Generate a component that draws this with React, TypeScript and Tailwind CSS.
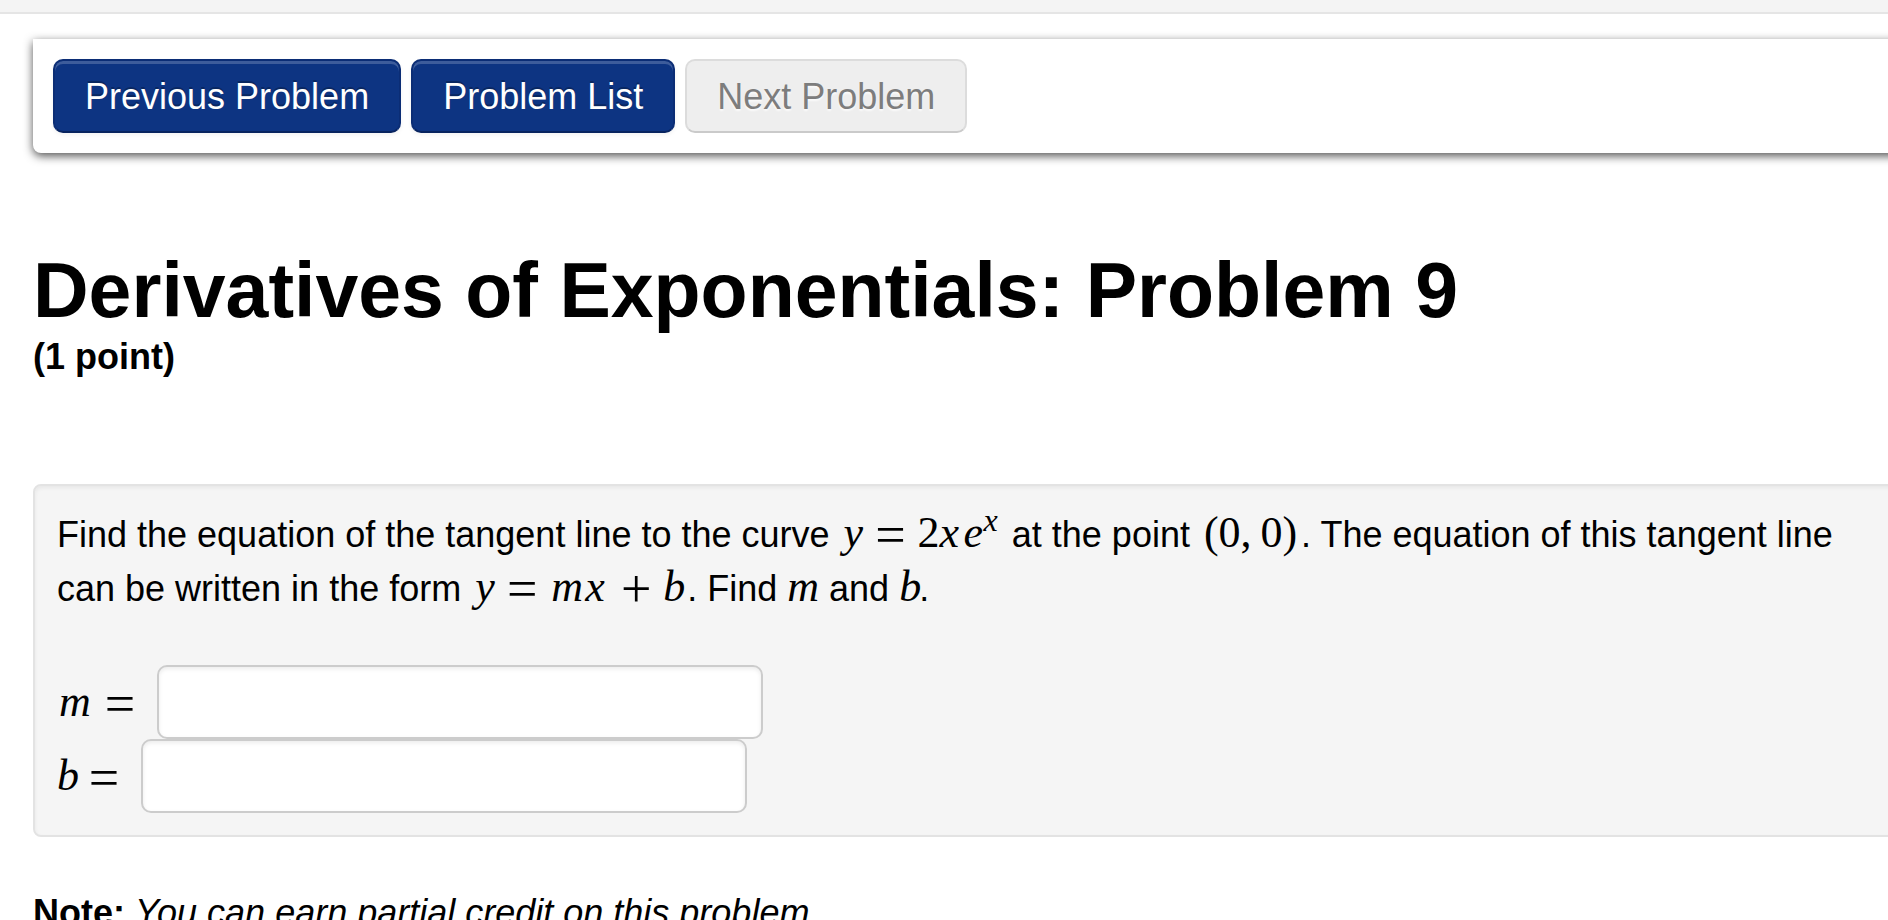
import { useState, type ReactNode } from "react";

export default function App() {
  const [answers, setAnswers] = useState({ m: "", b: "" });

  return (
    <div className="h-screen overflow-hidden bg-white font-['Liberation_Sans',Arial,sans-serif] text-4xl text-black">
      <div className="h-[14px] border-b-2 border-[#e5e5e5] bg-[#f4f4f4]" />

      <main className="pl-[33px]">
        {/* Both panels run off the right side of the window. */}
        <nav className="-mr-10 mt-[25px] flex gap-[10px] rounded-b-lg bg-white p-5 shadow-[0_3px_10px_rgba(0,0,0,0.68)]">
          <NavButton>Previous Problem</NavButton>
          <NavButton>Problem List</NavButton>
          <NavButton disabled>Next Problem</NavButton>
        </nav>

        <h1 className="mt-[95px] text-[77px] leading-[84px] font-bold">
          Derivatives of Exponentials: Problem 9
        </h1>
        <p className="leading-[50px] font-bold">(1 point)</p>

        <section className="-mr-10 mt-[102px] rounded-lg border-2 border-[#e3e3e3] bg-[#f5f5f5] py-[22px] pr-16 pl-[22px] shadow-[inset_0_2px_4px_rgba(0,0,0,0.06)]">
          <p className="leading-[54px]">
            Find the equation of the tangent line to the curve{" "}
            <Formula spaced>
              <Var>y</Var>
              <Op>=</Op>2<i className="inline-block w-6">x</i>
              <Var>e</Var>
              <sup className="text-[32px] leading-none italic">x</sup>
            </Formula>{" "}
            at the point <Formula spaced>(0,&thinsp;0)</Formula>. The equation of this tangent line
            <br />
            can be written in the form{" "}
            <Formula spaced>
              <Var>y</Var>
              <Op>=</Op>
              <WideVar>m</WideVar>
              <i className="inline-block w-6">x</i>
              <Op>+</Op>
              <Var>b</Var>
            </Formula>
            . Find{" "}
            <Formula>
              <i>m</i>
            </Formula>{" "}
            and{" "}
            <Formula>
              <Var>b</Var>
            </Formula>
            .
          </p>

          <form className="mt-[49px]" onSubmit={(e) => e.preventDefault()}>
            <AnswerRow
              id="answer-m"
              symbol={<WideVar>m</WideVar>}
              value={answers.m}
              onChange={(m) => setAnswers({ ...answers, m })}
            />
            <AnswerRow
              id="answer-b"
              symbol={<Var>b</Var>}
              value={answers.b}
              onChange={(b) => setAnswers({ ...answers, b })}
            />
          </form>
        </section>

        <p className="mt-[49px] leading-[54px]">
          <b>Note:</b> <i>You can earn partial credit on this problem.</i>
        </p>
      </main>
    </div>
  );
}

function NavButton({ disabled, children }: { disabled?: boolean; children: ReactNode }) {
  return (
    <button
      type="button"
      disabled={disabled}
      className={`h-[74px] rounded-[10px] border-2 px-[30px] pt-[2px] ${
        disabled
          ? "border-[#dcdcdc] border-b-[#cacaca] bg-[#eeeeee] text-[#7d7d7d] [text-shadow:0_2px_2px_rgba(255,255,255,0.75)]"
          : "border-[#0b2d75] border-b-[#08245f] bg-[#0d3482] text-white shadow-[inset_0_3px_0_rgba(255,255,255,0.2),0_2px_4px_rgba(0,0,0,0.05)] [text-shadow:0_-2px_0_rgba(0,0,0,0.25)]"
      }`}
    >
      {children}
    </button>
  );
}

function AnswerRow({
  id,
  symbol,
  value,
  onChange,
}: {
  id: string;
  symbol: ReactNode;
  value: string;
  onChange: (value: string) => void;
}) {
  return (
    <div className="flex items-center gap-[10px]">
      <label htmlFor={id}>
        <Formula>
          {symbol}
          <Op>=</Op>
        </Formula>
      </label>
      <input
        id={id}
        type="text"
        value={value}
        onChange={(e) => onChange(e.target.value)}
        className="h-[74px] w-[606px] rounded-[10px] border-2 border-[#cccccc] bg-white px-3 shadow-[inset_0_2px_4px_rgba(0,0,0,0.08)] outline-none focus:border-[#52a8ec]"
      />
    </div>
  );
}

function Formula({ spaced, children }: { spaced?: boolean; children: ReactNode }) {
  return (
    <span
      className={`font-['Liberation_Serif','Times_New_Roman',serif] text-[44px] leading-none whitespace-nowrap ${
        spaced ? "mx-1" : ""
      }`}
    >
      {children}
    </span>
  );
}

function Var({ children }: { children: ReactNode }) {
  return <i className="inline-block w-5">{children}</i>;
}

function WideVar({ children }: { children: ReactNode }) {
  return <i className="inline-block w-9 text-center">{children}</i>;
}

/** Relation or binary operator, set wider than the letters around it. */
function Op({ children }: { children: ReactNode }) {
  return (
    <span className="mx-[11px] inline-block w-8 text-center align-[-6px] text-[54px] leading-8">
      {children}
    </span>
  );
}
